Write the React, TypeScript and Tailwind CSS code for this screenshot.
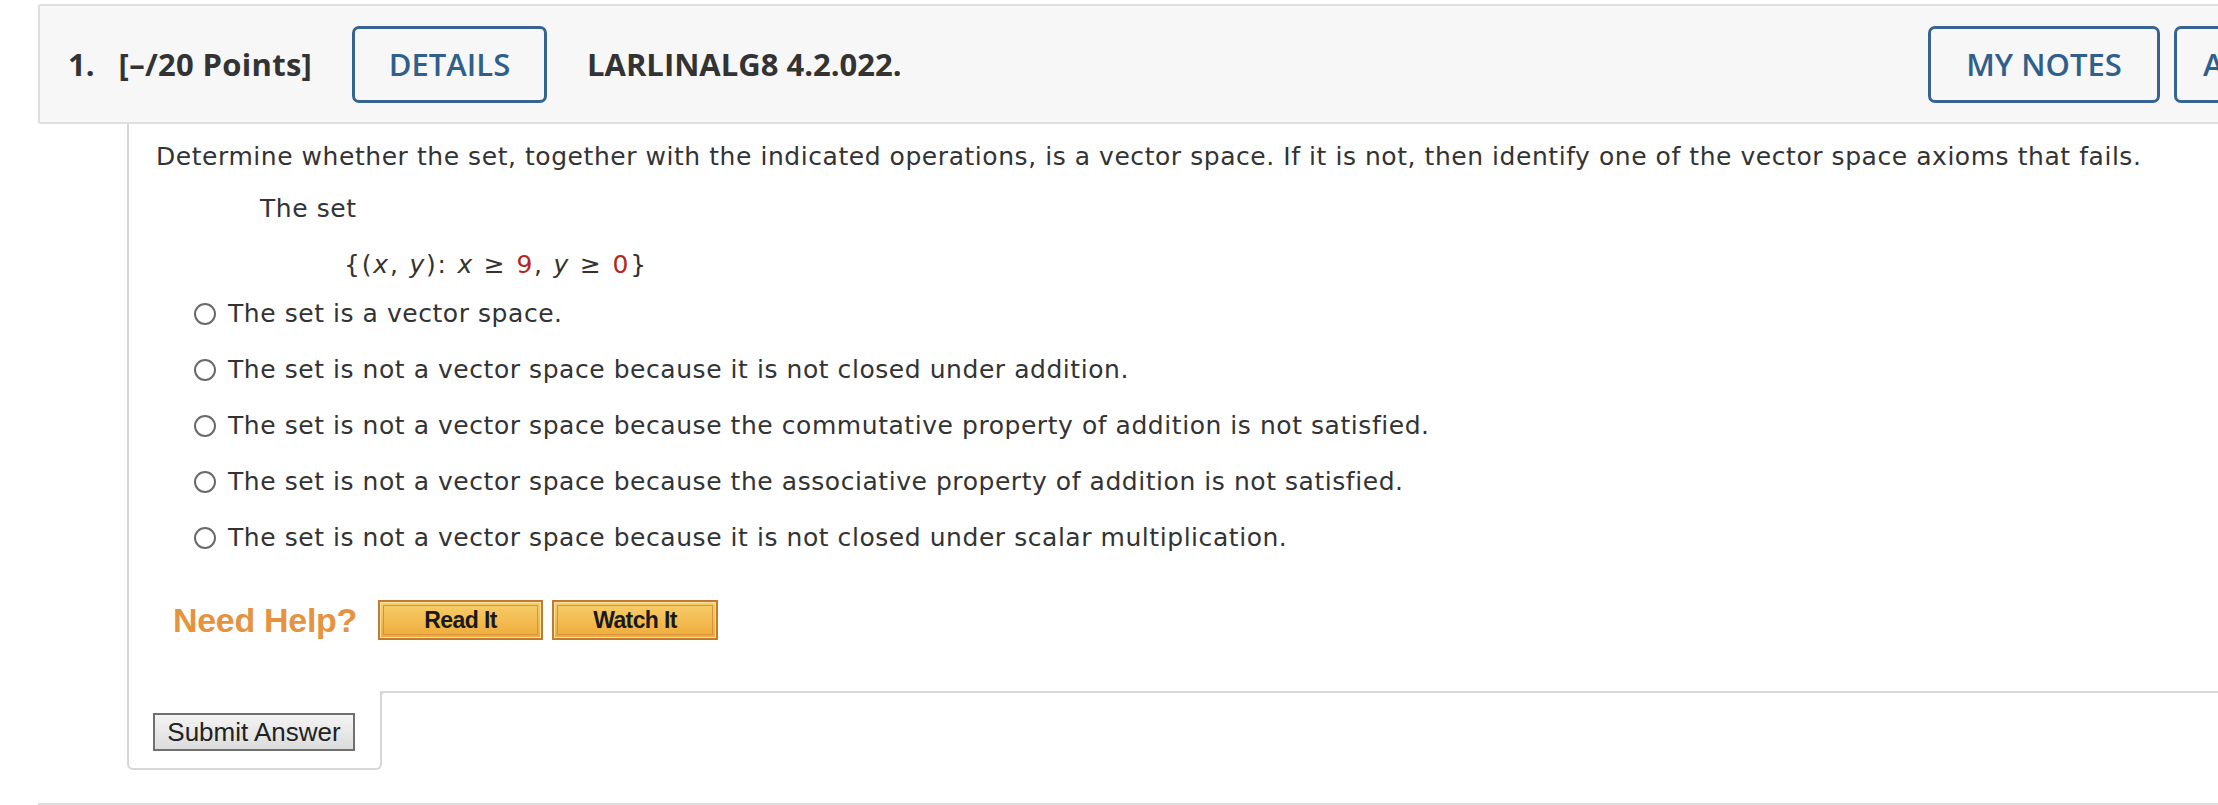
import React from "react";

const options = [
  "The set is a vector space.",
  "The set is not a vector space because it is not closed under addition.",
  "The set is not a vector space because the commutative property of addition is not satisfied.",
  "The set is not a vector space because the associative property of addition is not satisfied.",
  "The set is not a vector space because it is not closed under scalar multiplication.",
];

function HelpButton({ label, w }: { label: string; w: string }) {
  return (
    <button
      className={`${w} h-[40px] border-2 border-[#c47a2c] bg-gradient-to-b from-[#f8cf6a] to-[#eeaa38] p-[3px] shadow-[inset_0_0_0_1px_#fbe3a6]`}
    >
      <span className="flex h-full w-full items-center justify-center border border-[#d9923c] text-[23px] font-bold tracking-[-0.6px] text-[#1a1a1a] [font-family:'Liberation_Sans',Arial,sans-serif]">
        {label}
      </span>
    </button>
  );
}

export default function App() {
  return (
    <div className="w-[2218px] h-[805px] overflow-hidden bg-white pt-[4px] pl-[38px]">
      {/* HEADER */}
      <div className="flex h-[120px] w-[2476px] items-center rounded-l-[3px] border-2 border-r-0 border-[#dedede] bg-[#f7f7f7] pl-[28px] text-[31px] [font-family:'Open_Sans',sans-serif]">
        <div className="flex w-[284px] shrink-0 items-center font-bold text-[#333]">
          <span>1.</span>
          <span className="ml-[24px] tracking-[0.3px]">[–/20 Points]</span>
        </div>
        <button className="flex h-[77px] w-[195px] shrink-0 items-center justify-center rounded-[7px] border-[3px] border-[#36648e] font-semibold text-[#2f5f8a]">
          DETAILS
        </button>
        <span className="ml-[40px] font-bold text-[#333]">LARLINALG8 4.2.022.</span>
        <div className="flex-1" />
        <button className="flex h-[77px] w-[232px] shrink-0 items-center justify-center rounded-[7px] border-[3px] border-[#36648e] font-semibold text-[#2f5f8a]">
          MY NOTES
        </button>
        <button className="ml-[14px] flex h-[77px] w-[340px] shrink-0 items-center justify-start rounded-[7px] border-[3px] border-[#36648e] pl-[26px] font-semibold text-[#2f5f8a]">
          ASK YOUR TEACHER
        </button>
      </div>

      {/* BODY */}
      <div className="ml-[89px] flex flex-col border-l-2 border-[#d6d6d6] pl-[27px] pt-[17px] text-[25px] leading-[32px] tracking-[0.55px] text-[#333] [font-family:'DejaVu_Sans',Verdana,sans-serif]">
        <p>
          Determine whether the set, together with the indicated operations, is a vector space. If it is not, then identify one of the vector space axioms that fails.
        </p>
        <p className="mt-[20px] pl-[104px]">The set</p>
        <p className="mt-[24px] pl-[188px] tracking-[1.8px]">
          {"{("}
          <i>x</i>, <i>y</i>): <i>x</i> ≥ <span className="text-[#b5261e]">9</span>, <i>y</i> ≥{" "}
          <span className="text-[#b5261e]">0</span>
          {"}"}
        </p>
        <div className="mt-[17px] flex flex-col gap-[24px] pl-[38px]">
          {options.map((o) => (
            <label key={o} className="flex items-center gap-[12px]">
              <span className="h-[22px] w-[22px] shrink-0 rounded-full border-2 border-[#6a6a6a] bg-white" />
              <span>{o}</span>
            </label>
          ))}
        </div>
        <div className="mt-[46px] flex items-center pl-[17px] tracking-normal">
          <span className="mr-[21px] text-[34px] font-bold tracking-[-0.3px] text-[#e6933f] [font-family:'Liberation_Sans',Arial,sans-serif]">
            Need Help?
          </span>
          <HelpButton label="Read It" w="w-[165px]" />
          <span className="w-[9px]" />
          <HelpButton label="Watch It" w="w-[166px]" />
        </div>
        <div className="h-[51px]" />
      </div>

      {/* SUBMIT TAB */}
      <div className="ml-[89px] flex">
        <div className="w-[255px] shrink-0 rounded-b-[6px] border-2 border-t-0 border-[#d6d6d6] pb-[17px] pl-[24px] pt-[22px]">
          <button className="h-[38px] w-[202px] border-2 border-[#707070] bg-gradient-to-b from-[#f4f4f4] to-[#dcdcdc] text-[26px] leading-none text-[#222] [font-family:'Liberation_Sans',Arial,sans-serif]">
            Submit Answer
          </button>
        </div>
        <div className="-ml-[2px] h-[20px] flex-1 rounded-tl-[4px] border-l-2 border-t-2 border-[#d6d6d6]" />
      </div>

      <div className="mt-[33px] h-[2px] w-full bg-[#dedede]" />
    </div>
  );
}
